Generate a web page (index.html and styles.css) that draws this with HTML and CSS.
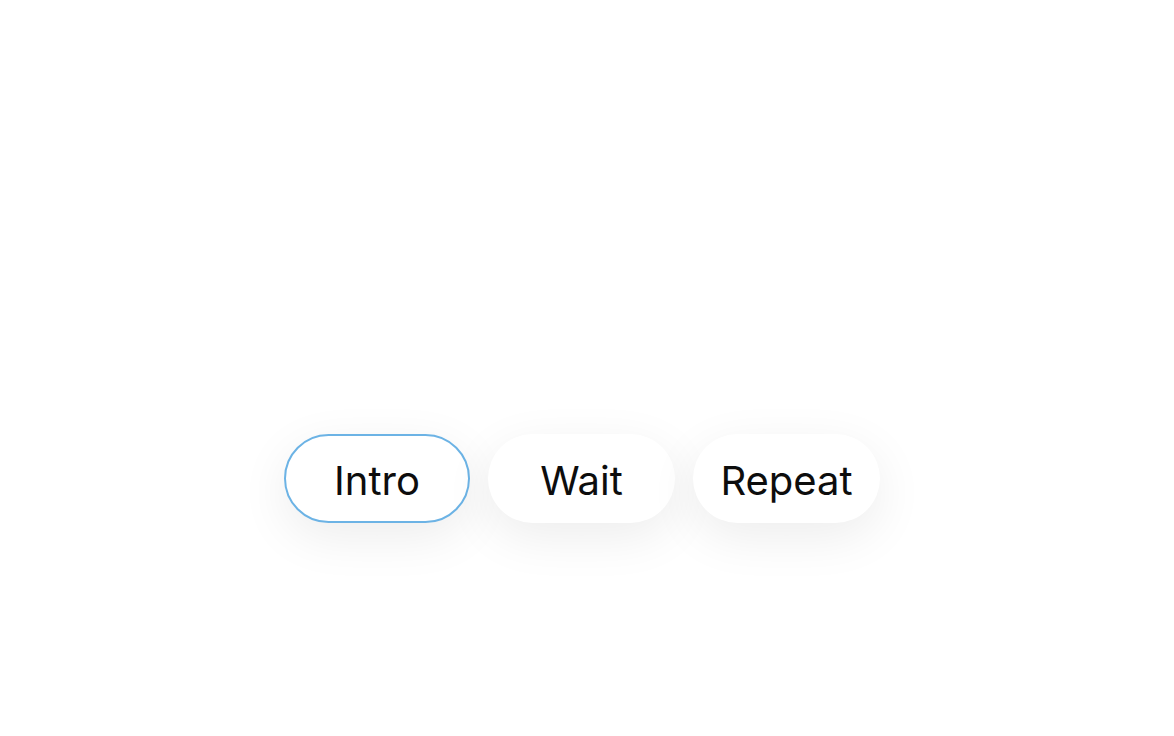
FILE: index.html
```html
<!DOCTYPE html>
<html>
<head>
<meta charset="utf-8">
<link rel="stylesheet" href="styles.css">
</head>
<body>
<div class="stage">
  <div class="group">
    <button class="pill active">Intro</button>
    <button class="pill">Wait</button>
    <button class="pill">Repeat</button>
  </div>
</div>
</body>
</html>
```
FILE: styles.css
```css
html, body {
  margin: 0;
  padding: 0;
  background: #ffffff;
}
.stage {
  width: 1174px;
  height: 736px;
  box-sizing: border-box;
  padding: 434px 0 0 284px;
}
.group {
  display: flex;
  gap: 18px;
}
.pill {
  width: 187px;
  height: 89px;
  box-sizing: border-box;
  border: 2px solid transparent;
  border-radius: 45px;
  background: #ffffff;
  font-family: Inter, "Noto Sans", sans-serif;
  font-size: 40px;
  font-weight: 400;
  color: #0d0d0d;
  padding: 3px 0 0 0;
  box-shadow: 0 14px 50px rgba(0, 0, 0, 0.075);
  cursor: pointer;
}
.pill.active {
  width: 186px;
  border-color: #6cb3e5;
}
```
